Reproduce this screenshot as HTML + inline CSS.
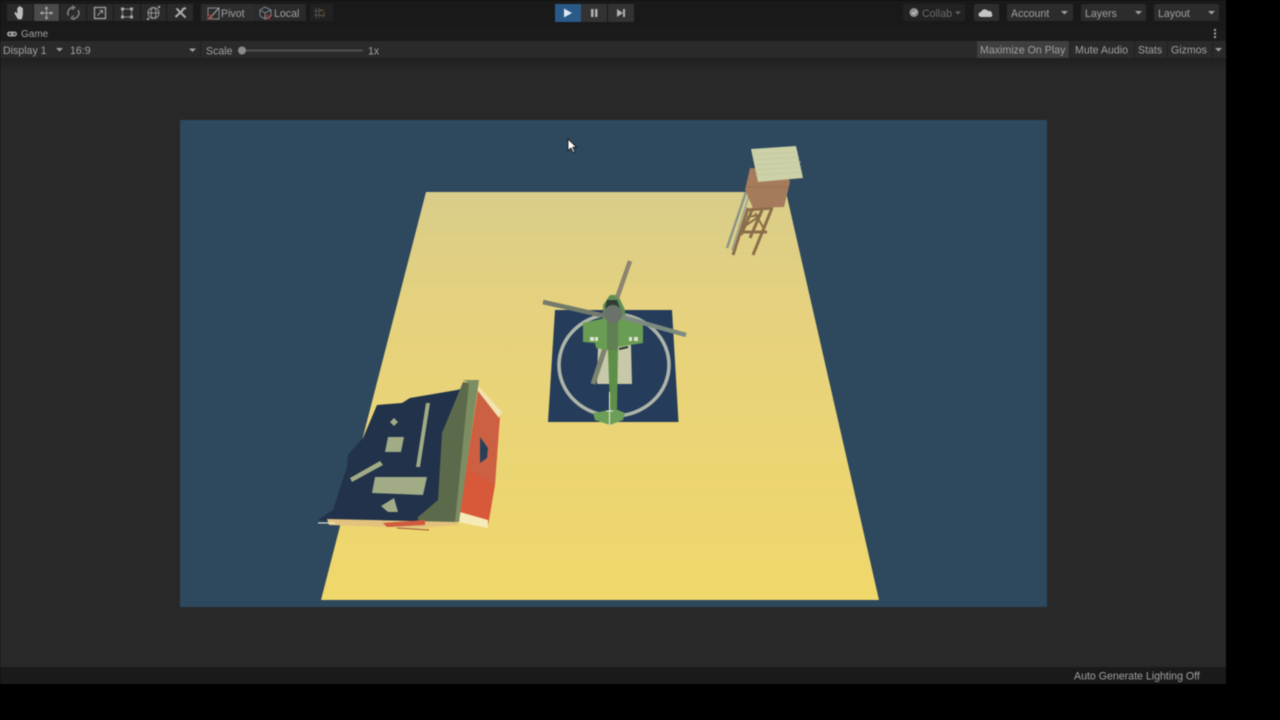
<!DOCTYPE html>
<html><head><meta charset="utf-8"><style>
html,body{margin:0;padding:0;background:#000;width:1280px;height:720px;overflow:hidden}
body{font-family:"Liberation Sans",sans-serif}
svg{display:block;position:absolute;left:0;top:0;filter:blur(.45px)}
text{font-family:"Liberation Sans",sans-serif;font-size:10.6px;fill:#a0a0a0}
</style></head><body>
<svg width="1280" height="720" viewBox="0 0 1280 720">
<defs>
<linearGradient id="sand" x1="0" y1="192" x2="0" y2="600" gradientUnits="userSpaceOnUse">
<stop offset="0" stop-color="#d9cd8a"/><stop offset=".3" stop-color="#e6d27e"/><stop offset="1" stop-color="#f0d86a"/>
</linearGradient>
<linearGradient id="top" x1="0" y1="58" x2="0" y2="70" gradientUnits="userSpaceOnUse">
<stop offset="0" stop-color="#1f1f1f"/><stop offset="1" stop-color="#282828"/>
</linearGradient>
</defs>
<rect width="1280" height="720" fill="#000"/>
<rect width="1226" height="684" fill="#191919"/>
<rect y="26" width="1226" height="15" fill="#1b1b1b"/>
<rect y="41" width="1226" height="17" fill="#2a2a2a"/>
<rect y="58" width="1226" height="609" fill="#282828"/>
<rect y="58" width="1226" height="12" fill="url(#top)"/>
<rect y="667" width="1226" height="17" fill="#1a1a1a"/>

<!-- tools -->
<rect x="7" y="4" width="186" height="17" fill="#2a2a2a"/>
<rect x="33" y="4" width="26" height="17" fill="#4a4a4a"/>
<g stroke="#191919"><path d="M33.500 4V21M59.500 4V21M86.500 4V21M113.500 4V21M140.500 4V21M166.500 4V21"/></g>
<path d="M18 19l-3.500-6 1-1 2 2.500V8h1.200v4.500V6.500h1.300v6V7h1.300v5.500V8h1.300v7l-1 4z" fill="#bdbdbd" stroke="#bdbdbd" stroke-width=".5"/>
<g stroke="#a8a8a8" fill="none" stroke-width="1"><path d="M46.500 8v10M41 13h11"/><path d="M45 9l1.500-2 1.500 2M45 17l1.500 2 1.500-2M43 11.500L40.500 13l2.500 1.500M50 11.500l2.500 1.500-2.500 1.500"/></g>
<path d="M68.500 15.500a5.500 5.500 0 0 1 5-8M78 10a5.500 5.500 0 0 1-5 8.500" stroke="#8c8c8c" stroke-width="1.400" fill="none"/><path d="M72 5.500l3 2-3 2.500M74 15.500l-3 2.500 3 2" stroke="#8c8c8c" fill="none"/>
<rect x="94.500" y="7.500" width="11" height="11" fill="none" stroke="#a0a0a0" stroke-width="1.300"/><path d="M97.500 15.500l5-5M99.500 10.500h3v3" stroke="#a0a0a0" fill="none"/>
<rect x="122.500" y="9" width="9" height="8" fill="none" stroke="#888"/><g fill="#a8a8a8"><rect x="121" y="7.500" width="3" height="3"/><rect x="130" y="7.500" width="3" height="3"/><rect x="121" y="15.500" width="3" height="3"/><rect x="130" y="15.500" width="3" height="3"/></g>
<g stroke="#9a9a9a" fill="none"><circle cx="153.500" cy="13" r="5.500"/><ellipse cx="153.500" cy="13" rx="2.500" ry="5.500"/><path d="M148 13h11"/></g><g fill="#aaa"><rect x="158" y="6" width="2" height="2"/><rect x="147" y="18" width="2" height="2"/></g>
<path d="M176.500 8.500l9 9" stroke="#aaa" stroke-width="2" fill="none"/><path d="M186 8l-3 1-1 2-6.500 6" stroke="#aaa" stroke-width="2.200" fill="none"/>

<!-- pivot/local -->
<rect x="201" y="4" width="105" height="17" fill="#2d2d2d"/><rect x="254" y="4" width="52" height="17" fill="#2a2a2a"/>
<rect x="208" y="8" width="11" height="11" fill="none" stroke="#8a8a8a"/><path d="M209 19l10-11" stroke="#aaa"/><circle cx="210" cy="17" r="2" fill="none" stroke="#a83838"/>
<text x="221" y="17">Pivot</text>
<path d="M260 10l5-3 6 3v6l-6 3-5-3z M260 10l5 3 6-3M265 13v6" fill="none" stroke="#7c8490"/><circle cx="268" cy="17" r="2" fill="none" stroke="#a83838"/>
<text x="274" y="17">Local</text>
<rect x="310" y="4" width="23" height="17" fill="#212121"/>
<path d="M316 8v10M319 8v10M314 11h8M314 15h8" stroke="#4e4e4e" fill="none"/><path d="M320 10h4M324 12v4h-3" stroke="#7a4a22" fill="none"/>

<!-- play -->
<rect x="555" y="4" width="26" height="18" fill="#2a5a87"/>
<rect x="581" y="4" width="26" height="18" fill="#323232"/><rect x="608" y="4" width="26" height="18" fill="#323232"/>
<path d="M564 8.500l8 4.500-8 4.500z" fill="#dfe9f2"/>
<path d="M591 9h2.500v8H591zM595 9h2.500v8H595z" fill="#b0b0b0"/>
<path d="M617 9l6 4-6 4z M623 9h2v8h-2z" fill="#b0b0b0"/>

<!-- right toolbar -->
<rect x="903" y="4" width="62" height="17" rx="2" fill="#222"/>
<circle cx="914" cy="12.500" r="4.500" fill="#8d8d8d"/><path d="M912 12.500l1.500 1.500 3-3" stroke="#ccc" fill="none"/>
<text x="922" y="17" style="fill:#6c6c6c">Collab</text>
<path d="M955 11.500h6l-3 3z" fill="#666"/>
<rect x="974" y="4" width="25" height="17" rx="2" fill="#2e2e2e"/>
<path d="M981 17a2.500 2.500 0 0 1 0-5 4 4 0 0 1 7-1 3 3 0 0 1 4 3 2 2 0 0 1-1 3z" fill="#c4c4c4"/>
<rect x="1007" y="4" width="66" height="17" rx="2" fill="#2c2c2c"/>
<text x="1011" y="17">Account</text><path d="M1061 11h7l-3.500 3.500z" fill="#a0a0a0"/>
<rect x="1081" y="4" width="65" height="17" rx="2" fill="#2c2c2c"/>
<text x="1085" y="17">Layers</text><path d="M1135 11h7l-3.500 3.500z" fill="#a0a0a0"/>
<rect x="1154" y="4" width="65" height="17" rx="2" fill="#2c2c2c"/>
<text x="1158" y="17">Layout</text><path d="M1208 11h7l-3.500 3.500z" fill="#a0a0a0"/>

<!-- tab -->
<rect x="7" y="31.500" width="10" height="5" rx="2.500" fill="#a0a0a0"/><circle cx="10" cy="34" r="1" fill="#222"/><circle cx="14.500" cy="34" r="1" fill="#222"/>
<text x="21" y="37" style="font-size:10px">Game</text>
<g fill="#aaa"><rect x="1214" y="29" width="2" height="2"/><rect x="1214" y="32.500" width="2" height="2"/><rect x="1214" y="36" width="2" height="2"/></g>

<!-- game toolbar -->
<text x="3" y="54">Display 1</text><path d="M56 48h7l-3.500 3.500z" fill="#a0a0a0"/>
<text x="70" y="54">16:9</text><path d="M189 48.500h7l-3.500 3.500z" fill="#a0a0a0"/>
<path d="M200.500 41v17" stroke="#1e1e1e"/>
<text x="206" y="54.500">Scale</text>
<rect x="241" y="49.500" width="122" height="2" fill="#505050"/><circle cx="242" cy="50.500" r="4" fill="#8b8b8b"/>
<text x="368" y="54.500">1x</text>
<rect x="977" y="41" width="92" height="17" fill="#3f3f3f"/>
<path d="M1069.500 41v17M1134.500 41v17M1167.500 41v17M1212.500 41v17" stroke="#1e1e1e"/>
<text x="980" y="53.500">Maximize On Play</text>
<text x="1075" y="53.500">Mute Audio</text>
<text x="1138" y="53.500">Stats</text>
<text x="1171" y="53.500">Gizmos</text>
<path d="M1215 48h7l-3.500 3.500z" fill="#a0a0a0"/>

<text x="1074" y="679.500">Auto Generate Lighting Off</text>

<!-- scene -->
<rect x="180" y="120" width="867" height="487" fill="#2e485e"/>
<path d="M426 192H786L879 600H321z" fill="url(#sand)"/>

<!-- helipad -->
<path d="M555 310H672L678.500 422H548z" fill="#253c5b"/>
<path d="M598 345h33l1 39h-35z" fill="#c8c9a8"/>
<ellipse cx="614" cy="365" rx="55" ry="51" fill="none" stroke="#aeb5a8" stroke-width="3.600"/>
<!-- rotor lower -->
<path d="M606 345L593 384" stroke="#7b826e" stroke-width="5"/>
<!-- helicopter -->
<path d="M603 305l7-10h8l7 15 1 12h-23z" fill="#5f8f50"/>
<path d="M583 323l22-5h18l20 7v18l-13 2-12 2-11 3-11-2-1-5-12-1z" fill="#6a9d54"/>
<g fill="#dfe3cf"><rect x="590" y="337" width="4" height="4"/><rect x="595" y="337" width="3" height="4"/><rect x="629" y="337" width="3" height="4"/><rect x="634" y="337" width="4" height="4"/></g>
<path d="M607 320h11v30h-11z" fill="#607f52"/>
<path d="M608 350h10l-1 60h-7z" fill="#5e8f48"/>
<path d="M593 413l17-3h8l7 3-2 7-13 5-15-5z" fill="#6c9e58"/>
<path d="M609.500 392v33M606 411h7" stroke="#e6ebd5" stroke-width="1"/>
<path d="M619 349l9-2" stroke="#26352a" stroke-width="2"/>
<!-- rotor blades -->
<path d="M543 302L605 316" stroke="#727a6c" stroke-width="4.500"/>
<path d="M622 317L686 335" stroke="#7c8a80" stroke-width="4.500"/>
<path d="M630 261L617 298" stroke="#8a8470" stroke-width="4.500"/>
<path d="M607 300h10l3 8h-15z" fill="#2e3d34"/>
<circle cx="613" cy="314" r="9" fill="#6b7269"/>

<!-- tower -->
<g fill="none" stroke="#8c6d4a" stroke-width="3">
<path d="M748 208L733 255M772 208L753 255M762 210L750 238M753 208L741 235M748 210l25-2M742 232l25 0"/>
</g>
<path d="M747 217L760 215M745 226l16-11M755 213l9 16" fill="none" stroke="#8c6d4a" stroke-width="2"/>
<path d="M746 192L727 248" stroke="#8a9488" stroke-width="2.500" fill="none"/>
<path d="M750 192L732 250" stroke="#97a094" stroke-width="1.500" fill="none"/>
<path d="M750 168l36 2 4 12-6 25-31 1-8-18z" fill="#a67b5c"/>
<path d="M746 187h42" stroke="#96704f" fill="none"/>
<path d="M751 149L796 146 803 178 758 182z" fill="#cdd1a8"/>
<path d="M752 155l46-3M753 160l46-3M754 165l47-3M755 170l46-3M756 175l46-3" stroke="#c2c69c" fill="none" opacity=".7"/>

<!-- building -->
<path d="M478 390L500 416 495 485 488 526 460 512z" fill="#d8583a"/>
<path d="M478 390L498 416 495 485 470 470z" fill="#cc6042"/>
<path d="M478 386L502 412 499 418 478 391z" fill="#f1e2b0"/>
<path d="M480 437l8 11-1 10-7 5z" fill="#27405a"/>
<path d="M460 512L488 520 488 528 458 522z" fill="#f6eab8"/>
<path d="M318 520L333 510 347 467 348 455 363 438 377 405 402 403 410 398 457 390 467 387 459 522 335 522z" fill="#21324a"/>
<path d="M463 382L442 433 438 500 418 517 418 523 458 522 470 383z" fill="#5c6a4c"/>
<path d="M463 380h16l-20 142h-4l14-139z" fill="#7d8d62"/>
<path d="M388 437h16l-3 15h-16z" fill="#a1ac87"/>
<path d="M426 403h4l-10 64h-4z" fill="#a1ac87"/>
<path d="M394 418l4 4-4 4-4-4z" fill="#a1ac87"/>
<path d="M350 478l30-17 3 4-31 17z" fill="#a1ac87"/>
<path d="M375 477h52l-4 18-51-2z" fill="#a1ac87"/>
<path d="M381 506l13-8 4 14h-10z" fill="#a1ac87"/>
<path d="M327 519l130 3 2 3-40 3-90-3z" fill="#e2c27e"/>
<path d="M383 523l42-3v5l-38 2z" fill="#cf5a3e"/>
<path d="M397 528l32 2" stroke="#a0503a" stroke-width="1"/>
<path d="M318 523h17" stroke="#f4f1e0" stroke-width="1"/>

<!-- cursor -->
<path d="M568 139v11.500l3-2.500 2 4.500 1.800-.8-2-4.400h3.700z" fill="#fff" stroke="#111" stroke-width=".8"/>
</svg>
</body></html>
